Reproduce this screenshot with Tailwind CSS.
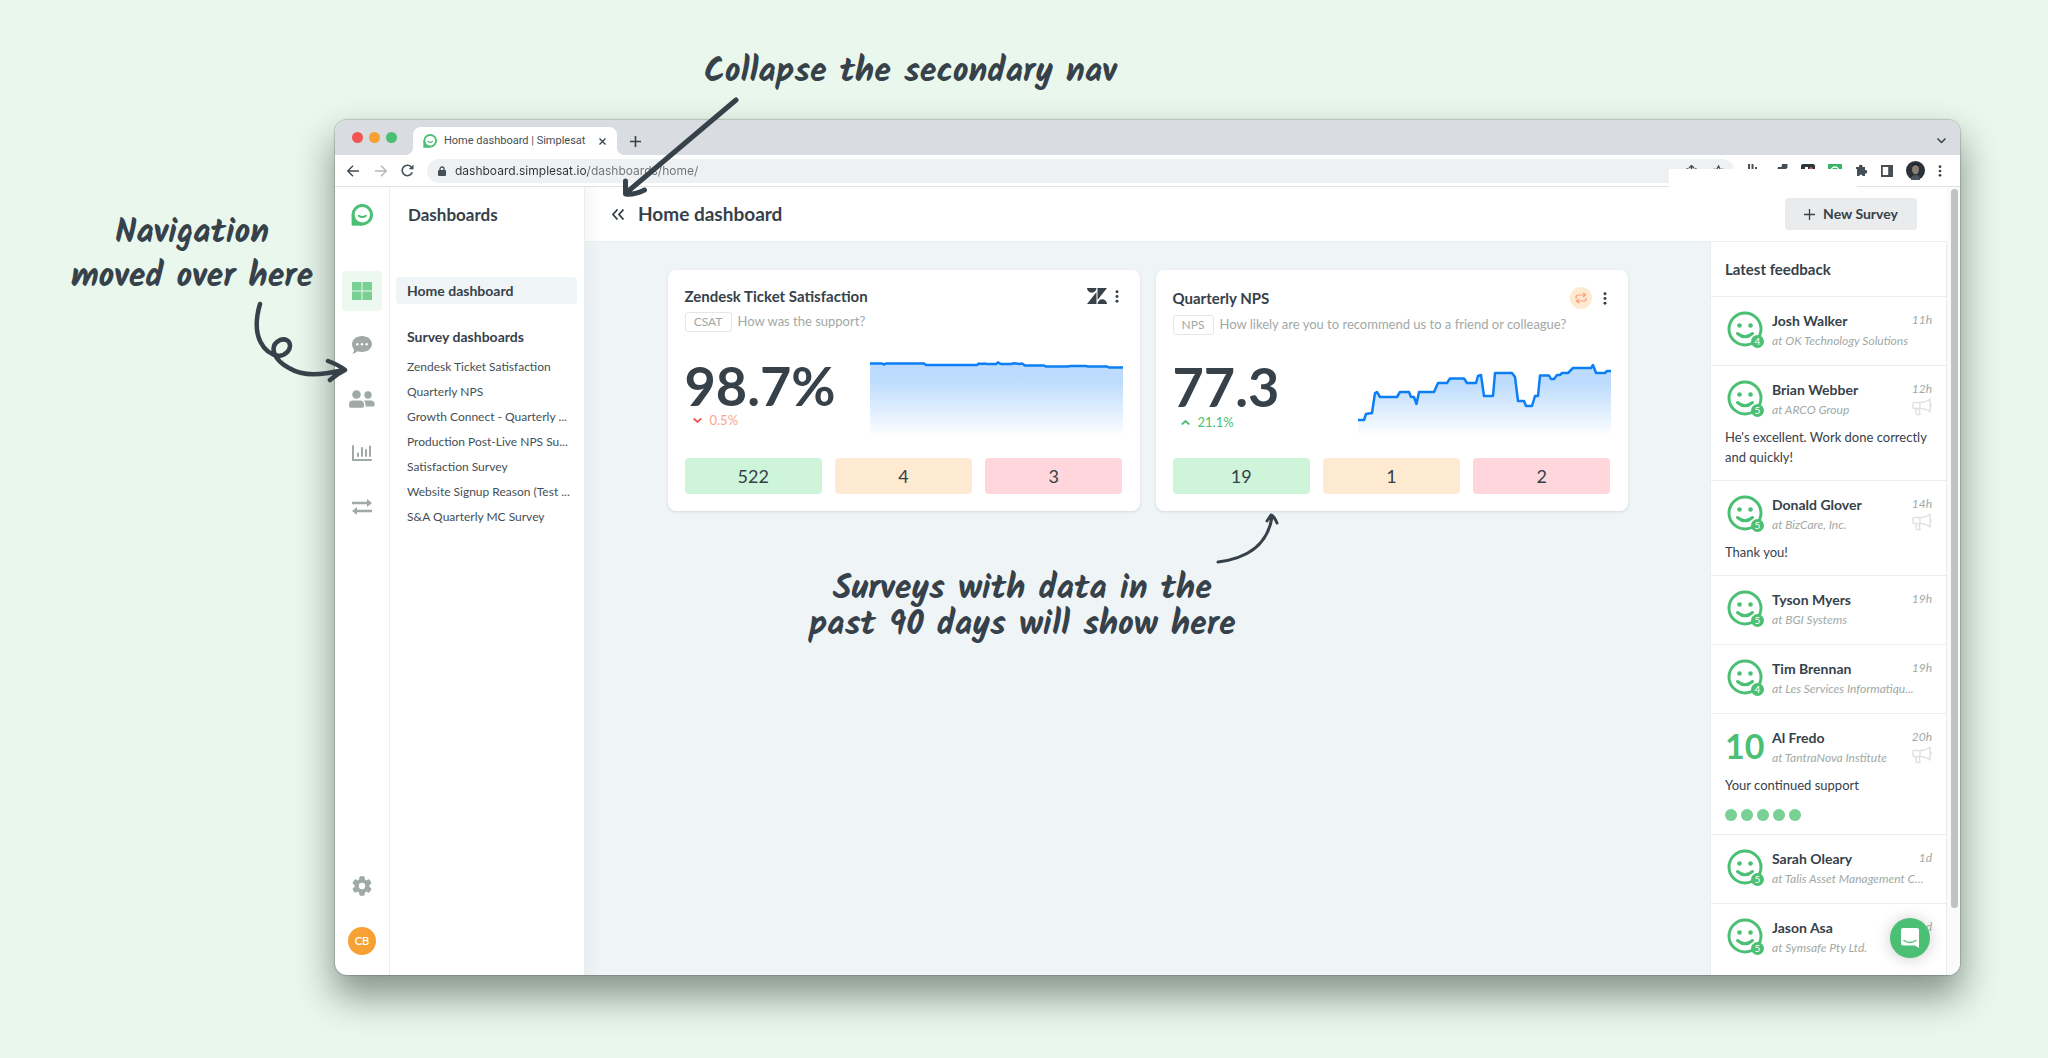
<!DOCTYPE html>
<html lang="en">
<head>
<meta charset="utf-8">
<meta name="viewport" content="width=device-width, initial-scale=1">
<title>Home dashboard | Simplesat</title>
<script src="https://cdn.jsdelivr.net/npm/@tailwindcss/browser@4"></script>
</head>
<body class="bg-[#e9f7ec] font-['Lato',sans-serif] text-[#36414a] antialiased">

<!-- Shared icons -->
<svg class="hidden" aria-hidden="true">
  <symbol id="logo" viewBox="0 0 22 22"><circle cx="11.300" cy="10.700" r="9.200" fill="none" stroke="#4bbf73" stroke-width="3"/><path d="M1 11v10.200h10.500l-1-2.200-3-1-3.500 1 1-3-1.500-2-1-3z" fill="#4bbf73" stroke="#4bbf73" stroke-width=".8" stroke-linejoin="round"/><path d="M7.700 11.800q3.600 2.600 7.200 0" fill="none" stroke="#4bbf73" stroke-width="2" stroke-linecap="round"/></symbol>
  <symbol id="smile" viewBox="0 0 36 36"><circle cx="18" cy="18" r="16" fill="none" stroke="#4bbf73" stroke-width="3"/><circle cx="12.500" cy="14.500" r="2.300" fill="#4bbf73"/><circle cx="23.500" cy="14.500" r="2.300" fill="#4bbf73"/><path d="M10.500 22.500q7.500 6.500 15 0" fill="none" stroke="#4bbf73" stroke-width="3" stroke-linecap="round"/></symbol>
  <symbol id="horn" viewBox="0 0 20 18"><g fill="none" stroke="#dfe2e4" stroke-width="1.500" stroke-linejoin="round"><path d="M2 4.500h6v6H2a1 1 0 0 1-1-1v-4a1 1 0 0 1 1-1zM8 4.500q6 0 10-3.500v13q-4-3.500-10-3.500M3.500 10.500l1 6h3.500l-1-6"/><path d="M19 6v3"/></g></symbol>
  <symbol id="dots" viewBox="0 0 4 14"><g fill="#36414a"><circle cx="2" cy="2" r="1.600"/><circle cx="2" cy="7" r="1.600"/><circle cx="2" cy="12" r="1.600"/></g></symbol>
</svg>

<main class="flex min-h-screen pt-[120px] pr-[88px] pb-[83px] pl-[335px]">
 <div class="relative flex grow">

  <!-- Browser window -->
  <div class="flex grow flex-col overflow-hidden rounded-xl bg-white shadow-[0_0_1px_1px_rgba(60,70,70,0.25),0_20px_36px_2px_rgba(20,30,25,0.45)]">

    <div class="flex h-[35px] items-end bg-[#d9dce1]">
      <div class="flex h-[35px] w-[70px] items-center gap-[6px] pl-[17px]">
        <span class="size-[11px] rounded-full bg-[#f25353]"></span>
        <span class="size-[11px] rounded-full bg-[#f7a135]"></span>
        <span class="size-[11px] rounded-full bg-[#4bbf73]"></span>
      </div>
      <span class="size-2 bg-[radial-gradient(circle_at_0_0,#d9dce1_8px,white_8px)]"></span>
      <div class="flex h-7 w-[204px] items-center rounded-t-lg bg-white pr-2 pl-[10px] font-['Roboto',sans-serif] text-[11px] text-[#454f55]">
        <svg class="size-[14px]"><use href="#logo"/></svg>
        <span class="ml-[7px] grow">Home dashboard | Simplesat</span>
        <button aria-label="Close tab" class="p-[3px]"><svg class="size-[7px]" viewBox="0 0 7 7" stroke="#36414a" stroke-width="1.300"><path d="M.5.5l6 6M6.500.5l-6 6"/></svg></button>
      </div>
      <span class="size-2 bg-[radial-gradient(circle_at_100%_0,#d9dce1_8px,white_8px)]"></span>
      <button aria-label="New tab" class="flex h-7 w-5 items-center justify-center"><svg class="size-[11px]" viewBox="0 0 11 11" stroke="#36414a" stroke-width="1.600"><path d="M5.500 0v11M0 5.500h11"/></svg></button>
      <button aria-label="Search tabs" class="mr-[14px] ml-auto flex h-7 items-center"><svg class="h-[6px] w-[9px]" viewBox="0 0 9 6" fill="none" stroke="#36414a" stroke-width="1.500"><path d="M.5.5l4 4 4-4"/></svg></button>
    </div>

    <div class="relative flex h-8 items-center border-b border-[#dfe1e3] pr-[18px] pl-3 text-[#454f55]">
      <button aria-label="Back"><svg class="size-3" viewBox="0 0 12 12" fill="none" stroke="currentColor" stroke-width="1.500"><path d="M12 6H1M6 .7L.7 6 6 11.300"/></svg></button>
      <button aria-label="Forward" class="ml-4"><svg class="size-3" viewBox="0 0 12 12" fill="none" stroke="#b3b8bb" stroke-width="1.500"><path d="M0 6h11M6 .7L11.300 6 6 11.300"/></svg></button>
      <button aria-label="Reload" class="ml-[14px]"><svg class="size-[13px]" viewBox="0 0 13 13" fill="none" stroke="currentColor" stroke-width="1.600"><path d="M11.300 8.300a5.200 5.200 0 1 1-1-5.300"/><path d="M12.500.5v4.800H7.700z" fill="currentColor" stroke="none"/></svg></button>
      <div class="ml-[13px] flex h-6 grow items-center rounded-full bg-[#eff0f2] pl-[11px]">
        <svg class="h-[10px] w-2" viewBox="0 0 8 10"><rect y="4" width="8" height="6" rx="1" fill="#454f55"/><path d="M2 4.500V3a2 2 0 0 1 4 0v1.500" fill="none" stroke="#454f55" stroke-width="1.300"/></svg>
        <input aria-label="Address" value="dashboard.simplesat.io/dashboards/home/" class="ml-[9px] w-80 bg-[linear-gradient(90deg,#2c353b_133px,#6a7478_133px)] bg-clip-text font-['Inter',sans-serif] text-xs text-transparent outline-none">
        <span class="mr-[10px] ml-auto flex gap-4">
          <svg class="size-[11px]" viewBox="0 0 11 11" fill="none" stroke="#454f55" stroke-width="1.300"><path d="M2.500 4H1v6.500h9V4H8.500M5.500 8V1M3 3l2.500-2.500L8 3"/></svg>
          <svg class="size-[11px]" viewBox="0 0 11 11" fill="none" stroke="#454f55" stroke-width="1.200"><path d="M5.500.8L7 4l3.500.4L8 6.800l.6 3.500-3.100-1.700-3.100 1.700L3 6.800.5 4.400 4 4z"/></svg>
        </span>
      </div>
      <div class="flex items-center gap-[13px] pl-[14px]">
        <svg class="h-[13px] w-[10px]" viewBox="0 0 10 13" fill="#454f55"><path d="M0 0h2v13H0zM3.500 0h2v13h-2zM7 3h2v10H7z"/></svg>
        <svg class="ml-1 size-[13px]" viewBox="0 0 13 13" fill="#454f55"><path d="M12.500 0v3.500L8 8 0 13l3-10h3.500L7 0z"/></svg>
        <svg class="size-[14px]" viewBox="0 0 14 14"><rect width="14" height="14" rx="2" fill="#2c353b"/><path d="M4 3h3v2H4z" fill="#fff"/><circle cx="10" cy="4.500" r="1.600" fill="#f25353"/></svg>
        <svg class="size-[14px]" viewBox="0 0 14 14"><rect width="14" height="14" rx="1" fill="#36b566"/><path d="M3 10V7a4 4 0 1 1 4 4" fill="none" stroke="#fff" stroke-width="1.300"/></svg>
        <svg class="size-[13px]" viewBox="0 0 13 13" fill="#454f55"><path d="M1 3h3a1.800 1.800 0 1 1 3.500 0H10v3a1.800 1.800 0 1 1 0 3.500V12H7.500a1.600 1.600 0 0 0-3.200 0H1V9a1.600 1.600 0 0 0 0-3z"/></svg>
        <svg class="size-3" viewBox="0 0 12 12"><path d="M0 0h12v12H0z" fill="#454f55"/><path d="M1.800 2h5.400v8H1.800z" fill="#fff"/></svg>
        <svg class="size-[19px]" viewBox="0 0 19 19"><circle cx="9.500" cy="9.500" r="9.500" fill="#2b3138"/><ellipse cx="9.500" cy="8.500" rx="3.500" ry="4.800" fill="#8b7c74"/><path d="M6 6q3.500-4 7 0l-.5-2.500q-3-2-6 0z" fill="#1b2025"/><path d="M5 19q0-5 4.500-5t4.500 5z" fill="#4d5660"/></svg>
        <button aria-label="Browser menu"><svg class="h-3 w-1"><use href="#dots"/></svg></button>
      </div>
      <!-- White patch that hides the extension icons -->
      <div class="absolute top-[14px] right-[103px] h-[18px] w-[188px] bg-white"></div>
    </div>

    <!-- Application -->
    <div class="flex grow">
      <nav aria-label="Primary" class="flex w-[55px] flex-col items-center border-r border-[#eaedee] pt-[17px] pb-5">
        <a href="#" aria-label="Simplesat"><svg class="size-[22px]"><use href="#logo"/></svg></a>
        <div class="mt-[45px] flex flex-col gap-[14px]">
          <a href="#" aria-label="Dashboards" class="flex size-10 items-center justify-center rounded bg-[#edf8f1]"><svg class="h-[18px] w-5" viewBox="0 0 20 18" fill="#78d093"><path d="M0 0h9.500v8.500H0zM10.500 0H20v8.500h-9.500zM0 9.500h9.500V18H0zM10.500 9.500H20V18h-9.500z"/></svg></a>
          <a href="#" aria-label="Feedback" class="flex size-10 items-center justify-center"><svg class="h-[18px] w-5" viewBox="0 0 20 18"><path d="M10 0c5.500 0 10 3.600 10 8s-4.500 8-10 8q-2.500 0-4.500-.8Q3 17.500.3 17.700q1.500-1.500 1.800-4Q0 11.500 0 8c0-4.400 4.500-8 10-8z" fill="#9fa9a6"/><g fill="#fff"><circle cx="5.300" cy="8.300" r="1.200"/><circle cx="10" cy="8.300" r="1.200"/><circle cx="14.700" cy="8.300" r="1.200"/></g></svg></a>
          <a href="#" aria-label="Customers" class="flex size-10 items-center justify-center"><svg class="h-[18px] w-[26px]" viewBox="0 0 26 18" fill="#9fa9a6"><circle cx="7.500" cy="4.500" r="4.300"/><circle cx="19" cy="5" r="3.700"/><path d="M0 16v-1.500Q0 10.500 4 10.500h7q4 0 4 4V16q0 1.800-1.500 1.800h-12Q0 17.800 0 16zM15 10.500h6.500q4 0 4 3.500v1q0 1.500-1.500 1.500h-7.500q.5-4-1.500-6z"/></svg></a>
          <a href="#" aria-label="Reports" class="flex size-10 items-center justify-center"><svg class="h-4 w-5" viewBox="0 0 20 16" fill="none" stroke="#9fa9a6" stroke-width="2" stroke-linecap="round"><path d="M1 1v14h18M6 11V8.500M10 11V3M14 11V5M18 11V1.500"/></svg></a>
          <a href="#" aria-label="Integrations" class="flex size-10 items-center justify-center"><svg class="h-4 w-5" viewBox="0 0 20 16"><path d="M0 4h16M4 12h16" stroke="#9fa9a6" stroke-width="2.500"/><path d="M15 0l5 4-5 4zM5 8l-5 4 5 4z" fill="#9fa9a6"/></svg></a>
        </div>
        <a href="#" aria-label="Settings" class="mt-auto"><svg class="size-5" viewBox="0 0 20 20"><path fill="#9fa9a6" stroke="#9fa9a6" stroke-linejoin="round" d="M8 .8h4l.4 2.800 2 1.200 2.700-1.100 2 3.500-2.200 1.700v2.200l2.200 1.700-2 3.500-2.700-1.100-2 1.200-.4 2.800H8l-.4-2.800-2-1.200-2.700 1.100-2-3.500 2.200-1.700V8.900L.9 7.200l2-3.500 2.700 1.100 2-1.200z"/><circle cx="10" cy="10" r="3.200" fill="#fff"/></svg></a>
        <button aria-label="Account" class="mt-[31px] size-7 rounded-full bg-[#f7a135] text-[11px] font-semibold text-white">CB</button>
      </nav>

      <nav aria-label="Dashboards" class="flex w-[195px] flex-col border-r border-[#eaedee] pr-[7px] pl-[6px]">
        <h2 class="mt-4 pl-3 text-[17px] leading-6 font-bold">Dashboards</h2>
        <a href="#" class="mt-[50px] flex h-[27px] items-center rounded bg-[#eff4f7] pl-[11px] text-sm font-bold">Home dashboard</a>
        <h3 class="mt-[23px] pl-[11px] text-sm leading-5 font-bold">Survey dashboards</h3>
        <ul class="mt-[7px] pl-[11px] text-xs leading-[25px] text-[#454f55]">
          <li><a href="#">Zendesk Ticket Satisfaction</a></li>
          <li><a href="#">Quarterly NPS</a></li>
          <li><a href="#">Growth Connect - Quarterly ...</a></li>
          <li><a href="#">Production Post-Live NPS Su...</a></li>
          <li><a href="#">Satisfaction Survey</a></li>
          <li><a href="#">Website Signup Reason (Test ...</a></li>
          <li><a href="#">S&amp;A Quarterly MC Survey</a></li>
        </ul>
      </nav>

      <div class="flex grow flex-col">
        <header class="flex h-[55px] items-center border-b border-[#eaedee] bg-[linear-gradient(90deg,#f6f7f8,white_16px)] pr-[30px] pl-[27px]">
          <button aria-label="Collapse secondary navigation"><svg class="h-[11px] w-3" viewBox="0 0 12 11" fill="none" stroke="#36414a" stroke-width="1.800"><path d="M5.500.5l-4.500 5 4.500 5M11.500.5l-4.500 5 4.500 5"/></svg></button>
          <h1 class="ml-[14px] text-[19px] font-bold">Home dashboard</h1>
          <button class="ml-auto flex h-8 w-[132px] items-center justify-center gap-2 rounded bg-[#e9ebec] text-sm font-bold"><svg class="size-[11px]" viewBox="0 0 11 11" stroke="#36414a" stroke-width="1.300"><path d="M5.500 0v11M0 5.500h11"/></svg>New Survey</button>
        </header>

        <div class="flex grow">
          <section class="flex grow items-start justify-center gap-4 bg-[linear-gradient(90deg,#ebeef1,#eff4f7_16px)] pt-7">

            <article class="flex h-[241px] w-[472px] flex-col rounded-lg bg-white px-[17px] pt-4 pb-[17px] shadow-[0_1px_3px_rgba(50,60,80,0.15)]">
              <div class="flex h-5 items-center">
                <h2 class="grow text-[15px] font-bold">Zendesk Ticket Satisfaction</h2>
                <svg class="h-4 w-5" viewBox="0 0 20 16" fill="#36414a"><path d="M0 0h9.500a4.750 4.750 0 0 1-9.500 0zM9.500 4v12H0zM10.500 0H20l-9.500 12zM10.500 16a4.750 4.750 0 0 1 9.500 0z"/></svg>
                <button aria-label="Card menu" class="mr-1 ml-2"><svg class="h-[13px] w-1"><use href="#dots"/></svg></button>
              </div>
              <p class="mt-[6px] flex h-5 items-center gap-[6px] text-[13px] text-[#9fa9a6]"><span class="flex h-5 w-[47px] items-center justify-center rounded-[3px] border border-[#e4e7e8] text-xs">CSAT</span>How was the support?</p>
              <div class="mt-7 flex justify-between">
                <div>
                  <p class="text-[54px] leading-[52px] font-bold">98.7%</p>
                  <p class="flex items-center gap-2 pl-2 text-[13px] leading-4 text-[#f9a58f]"><svg class="h-[5px] w-[9px]" viewBox="0 0 9 5" fill="none" stroke="#f25353" stroke-width="1.800"><path d="M.7.5l3.800 3.500L8.300.5"/></svg>0.5%</p>
                </div>
                <svg class="h-[77px] w-[253px]" viewBox="0 0 253 77">
                  <defs><linearGradient id="fade" x2="0" y2="1"><stop offset=".25" stop-color="#bddcfd"/><stop offset="1" stop-color="#fff"/></linearGradient></defs>
                  <path fill="url(#fade)" d="M0 3.500H54L57 5H107L110 3H150L156 5 176 6H236L240 7H253V77H0z"/>
                  <path fill="none" stroke="#0c7ff5" stroke-width="2.500" d="M0 3.500H12l2 1 2-1H54L56 5H107l2-1.500 3 .5 2-.5 3 .5h9l2-1.500 3 1.500h10l3-.8 5 .8 3-.5 3 2h19l2 1h22l2-.5h16l2 .5h19l2 1h15"/>
                </svg>
              </div>
              <div class="mt-auto grid grid-cols-3 gap-[13px] text-center text-lg leading-9">
                <span class="rounded bg-[#cef5da]">522</span><span class="rounded bg-[#feead0]">4</span><span class="rounded bg-[#fed6db]">3</span>
              </div>
            </article>

            <article class="flex h-[241px] w-[472px] flex-col rounded-lg bg-white px-[17px] pt-[17px] pb-[17px] shadow-[0_1px_3px_rgba(50,60,80,0.15)]">
              <div class="flex h-[22px] items-center">
                <h2 class="grow text-[15px] font-bold">Quarterly NPS</h2>
                <span class="flex size-[22px] items-center justify-center rounded-full bg-[#feead0]"><svg class="h-3 w-3" viewBox="0 0 12 12" fill="none" stroke="#f9a07f" stroke-width="1.200" stroke-linejoin="round"><path d="M1 7V5.500Q1 3 3.500 3H10M8 .8L10.500 3 8 5M11 5.500V7Q11 9 8.500 9H2M4 7L1.500 9 4 11.300"/></svg></span>
                <button aria-label="Card menu" class="mr-1 ml-[11px]"><svg class="h-[13px] w-1"><use href="#dots"/></svg></button>
              </div>
              <p class="mt-[6px] flex h-5 items-center gap-[6px] text-[13px] text-[#9fa9a6]"><span class="flex h-5 w-[41px] items-center justify-center rounded-[3px] border border-[#e4e7e8] text-xs">NPS</span>How likely are you to recommend us to a friend or colleague?</p>
              <div class="mt-[25px] flex justify-between">
                <div>
                  <p class="text-[54px] leading-[54px] font-bold">77.3</p>
                  <p class="flex items-center gap-2 pl-2 text-[13px] leading-4 text-[#4bbf73]"><svg class="h-[5px] w-[9px]" viewBox="0 0 9 5" fill="none" stroke="#4bbf73" stroke-width="1.800"><path d="M.7 4.500L4.500 1l3.800 3.500"/></svg>21.1%</p>
                </div>
                <svg class="h-[77px] w-[253px]" viewBox="0 0 253 77">
                  <path fill="url(#fade)" d="M0 60H6L8 54 14 53 17 33 19 32 22 37H39L42 32H51L53 37H56L58.500 44 61 32H76L80 23H89L92 18.500H106L109 23H118L120 16 123 15 126 36H135L137 13H154L157 17 160 41H166L168 46H174L177 36H180L182 15.500H191L193 19H196L199 15H202L204 13H210L215 8H233L235 5 238 13H247L249 11H253V77H0z"/>
                  <path fill="none" stroke="#0c7ff5" stroke-width="2.500" stroke-linejoin="round" d="M0 60H6L8 54 14 53 17 33 19 32 22 37H39L42 32H51L53 37H56L58.500 44 61 32H76L80 23H89L92 18.500H106L109 23H118L120 16 123 15 126 36H135L137 13H154L157 17 160 41H166L168 46H174L177 36H180L182 15.500H191L193 19H196L199 15H202L204 13H210L215 8H233L235 5 238 13H247L249 11H253"/>
                </svg>
              </div>
              <div class="mt-auto grid grid-cols-3 gap-[13px] text-center text-lg leading-9">
                <span class="rounded bg-[#cef5da]">19</span><span class="rounded bg-[#feead0]">1</span><span class="rounded bg-[#fed6db]">2</span>
              </div>
            </article>
          </section>

          <aside class="w-[237px] border-x border-[#eaedee]">
            <h2 class="flex h-[55px] items-center border-b border-[#eaedee] pl-[14px] text-[15px] font-bold">Latest feedback</h2>
            <ul class="text-sm whitespace-nowrap">
              <li class="border-b border-[#eaedee] px-[14px] pt-[14px] pb-[10px]">
                <div class="flex h-11 gap-[9px]">
                  <div class="relative ml-[2px] w-9 shrink-0"><svg class="size-9"><use href="#smile"/></svg><span class="absolute top-6 left-6 size-[13px] rounded-full bg-[#4bbf73] text-center text-[10px] leading-[13px] text-white">4</span></div>
                  <div class="w-0 grow"><h3 class="leading-5 font-bold">Josh Walker</h3><p class="text-xs leading-5 text-[#9fa9a6] italic">at OK Technology Solutions</p></div>
                  <time class="text-xs leading-[18px] text-[#9fa9a6] italic">11h</time>
                </div>
              </li>
              <li class="border-b border-[#eaedee] px-[14px] pt-[14px] pb-[13px]">
                <div class="flex h-11 gap-[9px]">
                  <div class="relative ml-[2px] w-9 shrink-0"><svg class="size-9"><use href="#smile"/></svg><span class="absolute top-6 left-6 size-[13px] rounded-full bg-[#4bbf73] text-center text-[10px] leading-[13px] text-white">5</span></div>
                  <div class="w-0 grow"><h3 class="leading-5 font-bold">Brian Webber</h3><p class="text-xs leading-5 text-[#9fa9a6] italic">at ARCO Group</p></div>
                  <div><time class="block text-right text-xs leading-[18px] text-[#9fa9a6] italic">12h</time><svg class="h-[18px] w-5"><use href="#horn"/></svg></div>
                </div>
                <p class="mt-[3px] text-[13px] leading-5 whitespace-normal">He's excellent. Work done correctly and quickly!</p>
              </li>
              <li class="border-b border-[#eaedee] px-[14px] pt-[14px] pb-[13px]">
                <div class="flex h-11 gap-[9px]">
                  <div class="relative ml-[2px] w-9 shrink-0"><svg class="size-9"><use href="#smile"/></svg><span class="absolute top-6 left-6 size-[13px] rounded-full bg-[#4bbf73] text-center text-[10px] leading-[13px] text-white">5</span></div>
                  <div class="w-0 grow"><h3 class="leading-5 font-bold">Donald Glover</h3><p class="text-xs leading-5 text-[#9fa9a6] italic">at BizCare, Inc.</p></div>
                  <div><time class="block text-right text-xs leading-[18px] text-[#9fa9a6] italic">14h</time><svg class="h-[18px] w-5"><use href="#horn"/></svg></div>
                </div>
                <p class="mt-[3px] text-[13px] leading-5">Thank you!</p>
              </li>
              <li class="border-b border-[#eaedee] px-[14px] pt-[14px] pb-[10px]">
                <div class="flex h-11 gap-[9px]">
                  <div class="relative ml-[2px] w-9 shrink-0"><svg class="size-9"><use href="#smile"/></svg><span class="absolute top-6 left-6 size-[13px] rounded-full bg-[#4bbf73] text-center text-[10px] leading-[13px] text-white">5</span></div>
                  <div class="w-0 grow"><h3 class="leading-5 font-bold">Tyson Myers</h3><p class="text-xs leading-5 text-[#9fa9a6] italic">at BGI Systems</p></div>
                  <time class="text-xs leading-[18px] text-[#9fa9a6] italic">19h</time>
                </div>
              </li>
              <li class="border-b border-[#eaedee] px-[14px] pt-[14px] pb-[10px]">
                <div class="flex h-11 gap-[9px]">
                  <div class="relative ml-[2px] w-9 shrink-0"><svg class="size-9"><use href="#smile"/></svg><span class="absolute top-6 left-6 size-[13px] rounded-full bg-[#4bbf73] text-center text-[10px] leading-[13px] text-white">4</span></div>
                  <div class="w-0 grow"><h3 class="leading-5 font-bold">Tim Brennan</h3><p class="text-xs leading-5 text-[#9fa9a6] italic">at Les Services Informatiqu...</p></div>
                  <time class="text-xs leading-[18px] text-[#9fa9a6] italic">19h</time>
                </div>
              </li>
              <li class="border-b border-[#eaedee] px-[14px] pt-[14px] pb-[13px]">
                <div class="flex h-11 gap-[9px]">
                  <div class="w-[38px] shrink-0 text-[34px] leading-9 font-bold text-[#4bbf73]">10</div>
                  <div class="w-0 grow"><h3 class="leading-5 font-bold">Al Fredo</h3><p class="text-xs leading-5 text-[#9fa9a6] italic">at TantraNova Institute</p></div>
                  <div><time class="block text-right text-xs leading-[18px] text-[#9fa9a6] italic">20h</time><svg class="h-[18px] w-5"><use href="#horn"/></svg></div>
                </div>
                <p class="mt-[3px] text-[13px] leading-5">Your continued support</p>
                <div class="mt-[14px] flex gap-1"><span class="size-3 rounded-full bg-[#78d093]"></span><span class="size-3 rounded-full bg-[#78d093]"></span><span class="size-3 rounded-full bg-[#78d093]"></span><span class="size-3 rounded-full bg-[#78d093]"></span><span class="size-3 rounded-full bg-[#78d093]"></span></div>
              </li>
              <li class="border-b border-[#eaedee] px-[14px] pt-[14px] pb-[10px]">
                <div class="flex h-11 gap-[9px]">
                  <div class="relative ml-[2px] w-9 shrink-0"><svg class="size-9"><use href="#smile"/></svg><span class="absolute top-6 left-6 size-[13px] rounded-full bg-[#4bbf73] text-center text-[10px] leading-[13px] text-white">5</span></div>
                  <div class="w-0 grow"><h3 class="leading-5 font-bold">Sarah Oleary</h3><p class="text-xs leading-5 text-[#9fa9a6] italic">at Talis Asset Management C...</p></div>
                  <time class="text-xs leading-[18px] text-[#9fa9a6] italic">1d</time>
                </div>
              </li>
              <li class="px-[14px] pt-[14px] pb-[10px]">
                <div class="flex h-11 gap-[9px]">
                  <div class="relative ml-[2px] w-9 shrink-0"><svg class="size-9"><use href="#smile"/></svg><span class="absolute top-6 left-6 size-[13px] rounded-full bg-[#4bbf73] text-center text-[10px] leading-[13px] text-white">5</span></div>
                  <div class="w-0 grow"><h3 class="leading-5 font-bold">Jason Asa</h3><p class="text-xs leading-5 text-[#9fa9a6] italic">at Symsafe Pty Ltd.</p></div>
                  <time class="text-xs leading-[18px] text-[#9fa9a6] italic">1d</time>
                </div>
              </li>
            </ul>
          </aside>
        </div>
      </div>

      <!-- Scrollbar -->
      <div class="w-[13px] bg-[#fafafa] pt-[2px] pl-1"><div class="h-[719px] w-[7px] rounded-full bg-[#bcc3c0]"></div></div>
    </div>
  </div>

  <button aria-label="Open chat" class="absolute right-[30px] bottom-[17px] flex size-10 items-center justify-center rounded-full bg-[#4bbf73] shadow-[0_1px_16px_rgba(0,0,0,0.2)]"><svg class="h-5 w-[18px]" viewBox="0 0 18 20"><path d="M2 0h14q2 0 2 2v18l-4-2.500H2q-2 0-2-2V2q0-2 2-2z" fill="#fff"/><path d="M3 12.500q6 4 12 0" fill="none" stroke="#4bbf73" stroke-width="1.500" stroke-linecap="round"/></svg></button>

  <!-- Handwritten notes and arrows -->
  <p class="absolute -top-[70px] left-[369px] font-['Kalam','Lato',cursive] text-[34px] leading-[44px] font-bold whitespace-nowrap">Collapse the secondary nav</p>
  <svg class="absolute -top-6 left-[286px] h-[104px] w-[118px]" viewBox="0 0 118 104" fill="none" stroke="#36414a" stroke-width="5" stroke-linecap="round" stroke-linejoin="round"><path d="M115 4L5 97M4.500 85v13q9 1 19-4"/></svg>

  <p class="absolute top-[91px] -left-[264px] text-center font-['Kalam','Lato',cursive] text-[34px] leading-[44px] font-bold whitespace-nowrap">Navigation<br>moved over here</p>
  <svg class="absolute top-[180px] -left-[84px] h-[86px] w-[100px]" viewBox="0 0 100 86" fill="none" stroke="#36414a" stroke-width="4.500" stroke-linecap="round" stroke-linejoin="round"><path d="M9 4C-1 38 14 54 28 56 44 53 41 36 29 40 17 46 23 60 38 68 53 77 70 75 93 70M77 61Q88 65 94 70 86 74 79 80"/></svg>

  <p class="absolute top-[451px] left-[474px] text-center font-['Kalam','Lato',cursive] text-[34px] leading-[36px] font-bold whitespace-nowrap">Surveys with data in the<br>past 90 days will show here</p>
  <svg class="absolute top-[391px] left-[880px] h-[56px] w-[66px]" viewBox="0 0 66 56" fill="none" stroke="#36414a" stroke-width="3" stroke-linecap="round" stroke-linejoin="round"><path d="M3 51Q51 45 57 6M52 10l4-6q3 1 6 8"/></svg>
 </div>
</main>
</body>
</html>
